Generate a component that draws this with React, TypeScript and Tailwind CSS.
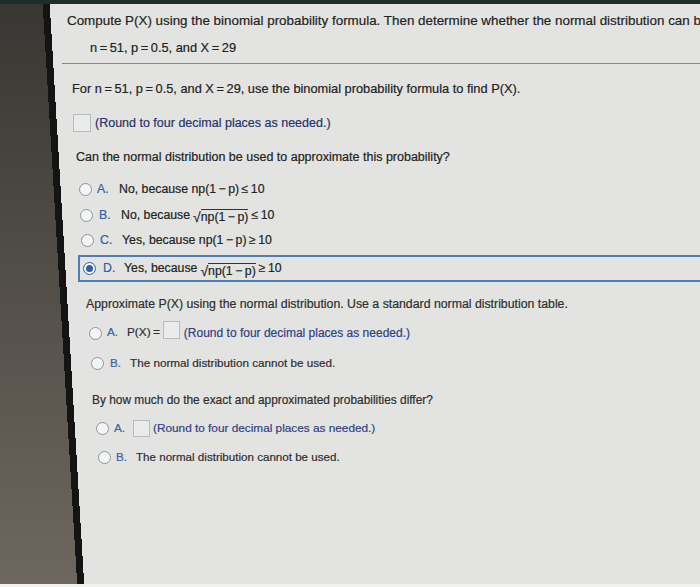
import React from "react";

const font = { fontFamily: '"Liberation Sans", Arial, sans-serif' };
const t = "\u2009";

function Radio({ checked = false }: { checked?: boolean }) {
  return (
    <span
      className={
        "inline-flex shrink-0 items-center justify-center w-[13px] h-[13px] rounded-full border bg-[#f4f5f6] " +
        (checked ? "border-[#2f5fa6]" : "border-[#8d94a0]")
      }
    >
      {checked && <span className="w-[7px] h-[7px] rounded-full bg-[#2f5fa6]" />}
    </span>
  );
}

function Sqrt({ children }: { children: React.ReactNode }) {
  return (
    <span className="inline-flex items-end">
      <span className="text-[14px] leading-[14px]">√</span>
      <span className="border-t border-[#333] leading-[14px]">{children}</span>
    </span>
  );
}

function Box({ w = 17, h = 18 }: { w?: number; h?: number }) {
  return (
    <span
      className="inline-block shrink-0 border border-[#b9bcbf] bg-[#e9ebec]"
      style={{ width: w, height: h }}
    />
  );
}

export default function App() {
  return (
    <div
      className="w-[700px] h-[587px] overflow-hidden border-t-[4px] border-t-[#1e2c2a] border-b-[3px] border-b-[#f1f0ef] bg-[linear-gradient(86.6deg,transparent_0,transparent_77px,#141414_77px,#141414_84px,#e3e4e1_84px),linear-gradient(to_bottom,#393733,#6e675f)] flex flex-col text-[#222] [-webkit-text-stroke:0.2px_currentColor]"
      style={font}
    >
      {/* Row 1 */}
      <div className="mt-[9px] pl-[67px] whitespace-nowrap text-[13.4px] leading-[16px] text-[#1f1f1f]">
        Compute P(X) using the binomial probability formula. Then determine whether the normal distribution can be
      </div>
      <div className="mt-[11px] pl-[90px] text-[12.8px] leading-[16px]">
        n{t}={t}51, p{t}={t}0.5, and X{t}={t}29
      </div>
      <div className="mt-[7px] ml-[62px] h-px bg-[#858788]" />

      <div className="mt-[17px] pl-[72px] text-[12.8px] leading-[16px]">
        For n{t}={t}51, p{t}={t}0.5, and X{t}={t}29, use the binomial probability formula to find P(X).
      </div>
      <div className="mt-[17px] pl-[73px] flex items-center gap-[4px] h-[18px] text-[12.5px]">
        <Box w={18} h={18} />
        <span className="text-[#27326a]">(Round to four decimal places as needed.)</span>
      </div>
      <div className="mt-[17px] pl-[76px] text-[12.5px] leading-[16px]">
        Can the normal distribution be used to approximate this probability?
      </div>

      {/* options */}
      <div className="mt-[16px] pl-[79px] flex items-center h-[16px] text-[12.3px]">
        <Radio />
        <span className="ml-[5px] w-[22px] text-[#2f5fa6]">A.</span>
        <span>No, because np(1{t}−{t}p){t}≤{t}10</span>
      </div>
      <div className="mt-[10px] pl-[80px] flex items-center h-[16px] text-[12.3px]">
        <Radio />
        <span className="ml-[6px] w-[22px] text-[#2f5fa6]">B.</span>
        <span className="flex items-end gap-[3px]">
          <span>No, because</span>
          <Sqrt>np(1{t}−{t}p)</Sqrt>
          <span>≤{t}10</span>
        </span>
      </div>
      <div className="mt-[9px] pl-[81px] flex items-center h-[16px] text-[12.3px]">
        <Radio />
        <span className="ml-[6px] w-[22px] text-[#2f5fa6]">C.</span>
        <span>Yes, because np(1{t}−{t}p){t}≥{t}10</span>
      </div>
      <div className="mt-[7px] ml-[78px] h-[27px] border-2 border-r-0 border-[#4f7db3] flex items-center pl-[3px] text-[12.3px]">
        <Radio checked />
        <span className="ml-[7px] w-[21px] text-[#2f5fa6]">D.</span>
        <span className="flex items-end gap-[3px]">
          <span>Yes, because</span>
          <Sqrt>np(1{t}−{t}p)</Sqrt>
          <span>≥{t}10</span>
        </span>
      </div>

      {/* Section 2 */}
      <div className="mt-[14px] pl-[86px] text-[12.3px] leading-[16px] text-[#2e2e2e]">
        Approximate P(X) using the normal distribution. Use a standard normal distribution table.
      </div>
      <div className="mt-[12px] pl-[89px] flex items-center h-[18px] text-[11.8px] text-[#2e2e2e]">
        <Radio />
        <span className="ml-[5px] w-[20px] text-[#3a63a8]">A.</span>
        <span>P(X){t}=</span>
        <span className="ml-[3px]">
          <Box w={17} h={18} />
        </span>
        <span className="ml-[4px] text-[12px] text-[#2f3f86]">(Round to four decimal places as needed.)</span>
      </div>
      <div className="mt-[13px] pl-[91px] flex items-center h-[16px] text-[11.7px] text-[#2e2e2e]">
        <Radio />
        <span className="ml-[6px] w-[20px] text-[#3a63a8]">B.</span>
        <span>The normal distribution cannot be used.</span>
      </div>

      {/* Section 3 */}
      <div className="mt-[21px] pl-[92px] text-[11.9px] leading-[16px] text-[#2e2e2e]">
        By how much do the exact and approximated probabilities differ?
      </div>
      <div className="mt-[12px] pl-[96px] flex items-center h-[17px] text-[11.8px] text-[#2e2e2e]">
        <Radio />
        <span className="ml-[5px] w-[19px] text-[#3a63a8]">A.</span>
        <Box w={17} h={17} />
        <span className="ml-[3px] text-[11.8px] text-[#2f3f86]">(Round to four decimal places as needed.)</span>
      </div>
      <div className="mt-[12px] pl-[98px] flex items-center h-[16px] text-[11.6px] text-[#2e2e2e]">
        <Radio />
        <span className="ml-[5px] w-[20px] text-[#3a63a8]">B.</span>
        <span>The normal distribution cannot be used.</span>
      </div>
    </div>
  );
}
